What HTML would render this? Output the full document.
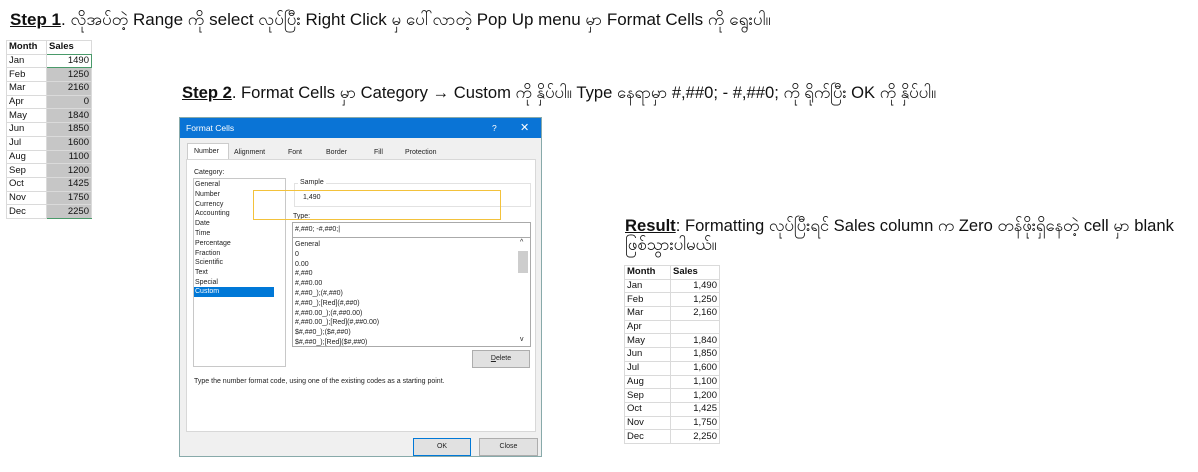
<!DOCTYPE html>
<html><head><meta charset="utf-8"><style>
*{margin:0;padding:0;box-sizing:border-box}
body{width:1198px;height:472px;background:#fff;position:relative;overflow:hidden;font-family:"Liberation Sans","DejaVu Sans",sans-serif;color:#111}
.a{position:absolute;white-space:nowrap}
.h{font-size:17px}
.h u{font-weight:bold}
table{border-collapse:collapse;position:absolute;font-size:9.5px;font-family:"Liberation Sans",sans-serif}
td{border:1px solid #dadada;padding:0 2px;height:13.7px;line-height:12px}
td.r{text-align:right}
.g{background:#c6c6c6}
.s{font-size:7px;color:#222}
.bx{position:absolute;border:1px solid #c8c8c8;background:#fff}
</style></head><body>
<div class="a h" style="left:10px;top:9px"><u>Step 1</u>. လိုအပ်တဲ့ Range ကို select လုပ်ပြီး Right Click မှ ပေါ်လာတဲ့ Pop Up menu မှာ Format Cells ကို ရွေးပါ။</div>

<table style="left:6px;top:40px;width:86px">
<tr><td style="width:40px"><b>Month</b></td><td style="border-bottom:1px solid #4a9a6a"><b>Sales</b></td></tr>
<tr><td>Jan</td><td class="r" style="border:1px solid #4a9a6a">1490</td></tr>
<tr><td>Feb</td><td class="r g">1250</td></tr>
<tr><td>Mar</td><td class="r g">2160</td></tr>
<tr><td>Apr</td><td class="r g">0</td></tr>
<tr><td>May</td><td class="r g">1840</td></tr>
<tr><td>Jun</td><td class="r g">1850</td></tr>
<tr><td>Jul</td><td class="r g">1600</td></tr>
<tr><td>Aug</td><td class="r g">1100</td></tr>
<tr><td>Sep</td><td class="r g">1200</td></tr>
<tr><td>Oct</td><td class="r g">1425</td></tr>
<tr><td>Nov</td><td class="r g">1750</td></tr>
<tr><td>Dec</td><td class="r g" style="border-bottom:1px solid #4a9a6a">2250</td></tr>
</table>

<div class="a h" style="left:182px;top:83px;font-size:16.6px"><u>Step 2</u>. Format Cells မှာ Category → Custom ကို နှိပ်ပါ။ Type နေရာမှာ #,##0; - #,##0; ကို ရိုက်ပြီး OK ကို နှိပ်ပါ။</div>

<!-- dialog -->
<div style="position:absolute;left:179px;top:117px;width:363px;height:340px;background:#f0f0f0;border:1px solid #8aa;">
 <div style="height:20px;background:#0a74d6;color:#fff;font-size:8.5px;line-height:20px;padding-left:6px;position:relative">Format Cells<span style="position:absolute;left:312px">?</span><span style="position:absolute;left:340px;font-size:11px">✕</span></div>
 <div class="a s" style="left:7px;top:25px;height:17px;width:42px;background:#fff;border:1px solid #ccc;border-bottom:none;line-height:16px;padding-left:6px">Number</div>
 <div class="a s" style="left:47px;top:29px;width:300px;line-height:12px"><span style="position:absolute;left:7px">Alignment</span><span style="position:absolute;left:61px">Font</span><span style="position:absolute;left:99px">Border</span><span style="position:absolute;left:147px">Fill</span><span style="position:absolute;left:178px">Protection</span></div>
 <div style="position:absolute;left:6px;top:41px;width:350px;height:273px;background:#fff;border:1px solid #d8d8d8"></div>
 <div class="a s" style="left:14px;top:51px">Category:</div>
 <div class="bx" style="left:13px;top:60px;width:93px;height:189px"></div>
 <div class="a s" style="left:15px;top:62px;line-height:9.8px">General<br>Number<br>Currency<br>Accounting<br>Date<br>Time<br>Percentage<br>Fraction<br>Scientific<br>Text<br>Special</div>
 <div class="a s" style="left:14px;top:169px;width:80px;height:10px;background:#0078d7;color:#fff;line-height:10px;padding-left:1px">Custom</div>
 <div class="bx" style="left:114px;top:65px;width:237px;height:24px;border-color:#e2e2e2"></div>
 <div class="a s" style="left:118px;top:61px;background:#fff;padding:0 2px">Sample</div>
 <div class="a s" style="left:123px;top:76px">1,490</div>
 <div class="a s" style="left:113px;top:95px;text-decoration:underline">Type:</div>
 <div class="bx" style="left:112px;top:104px;width:239px;height:16px;border-color:#aaa"></div>
 <div class="a s" style="left:115px;top:108px">#,##0; -#,##0;|</div>
 <div class="bx" style="left:112px;top:119px;width:239px;height:110px;border-color:#aaa"></div>
 <div class="a s" style="left:115px;top:122px;line-height:9.8px">General<br>0<br>0.00<br>#,##0<br>#,##0.00<br>#,##0_);(#,##0)<br>#,##0_);[Red](#,##0)<br>#,##0.00_);(#,##0.00)<br>#,##0.00_);[Red](#,##0.00)<br>$#,##0_);($#,##0)<br>$#,##0_);[Red]($#,##0)</div>
 <div class="a" style="left:338px;top:133px;width:10px;height:22px;background:#cdcdcd"></div>
 <div class="a s" style="left:340px;top:121px">^</div>
 <div class="a s" style="left:340px;top:218px">v</div>
 <div class="a s" style="left:292px;top:232px;width:58px;height:18px;background:#e1e1e1;border:1px solid #adadad;text-align:center;line-height:16px"><u>D</u>elete</div>
 <div class="a s" style="left:14px;top:260px">Type the number format code, using one of the existing codes as a starting point.</div>
 <div class="a s" style="left:233px;top:320px;width:58px;height:18px;background:#e1e1e1;border:1px solid #0078d7;text-align:center;line-height:16px">OK</div>
 <div class="a s" style="left:299px;top:320px;width:59px;height:18px;background:#e1e1e1;border:1px solid #adadad;text-align:center;line-height:16px">Close</div>
</div>
<div class="a" style="left:253px;top:190px;width:248px;height:30px;border:1.5px solid #f3c23b"></div>

<div class="a h" style="left:625px;top:216px;line-height:19px;font-size:16.6px"><u>Result</u>: Formatting လုပ်ပြီးရင် Sales column က Zero တန်ဖိုးရှိနေတဲ့ cell မှာ blank<br>ဖြစ်သွားပါမယ်။</div>

<table style="left:624px;top:265px;width:96px;border:1px solid #ccc">
<tr><td style="width:46px"><b>Month</b></td><td><b>Sales</b></td></tr>
<tr><td>Jan</td><td class="r">1,490</td></tr>
<tr><td>Feb</td><td class="r">1,250</td></tr>
<tr><td>Mar</td><td class="r">2,160</td></tr>
<tr><td>Apr</td><td class="r"></td></tr>
<tr><td>May</td><td class="r">1,840</td></tr>
<tr><td>Jun</td><td class="r">1,850</td></tr>
<tr><td>Jul</td><td class="r">1,600</td></tr>
<tr><td>Aug</td><td class="r">1,100</td></tr>
<tr><td>Sep</td><td class="r">1,200</td></tr>
<tr><td>Oct</td><td class="r">1,425</td></tr>
<tr><td>Nov</td><td class="r">1,750</td></tr>
<tr><td>Dec</td><td class="r">2,250</td></tr>
</table>
</body></html>
